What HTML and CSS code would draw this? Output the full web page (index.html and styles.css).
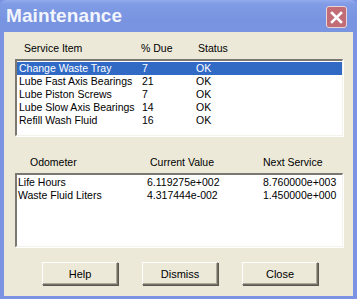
FILE: index.html
```html
<!DOCTYPE html>
<html>
<head>
<meta charset="utf-8">
<link rel="stylesheet" href="styles.css">
</head>
<body>
<div class="window">
  <div class="titlebar">
    <span class="title">Maintenance</span>
    <span class="close-btn">
      <svg width="13" height="13" viewBox="0 0 13 13"><path d="M2 2 L11 11 M11 2 L2 11" stroke="#fff" stroke-width="2.6" stroke-linecap="square"/></svg>
    </span>
  </div>
  <div class="content">
    <div class="head head1">
      <span>Service Item</span><span>% Due</span><span>Status</span>
    </div>
    <div class="listbox list1">
      <div class="row r1 selected"><span>Change Waste Tray</span><span>7</span><span>OK</span></div>
      <div class="row r1"><span>Lube Fast Axis Bearings</span><span>21</span><span>OK</span></div>
      <div class="row r1"><span>Lube Piston Screws</span><span>7</span><span>OK</span></div>
      <div class="row r1"><span>Lube Slow Axis Bearings</span><span>14</span><span>OK</span></div>
      <div class="row r1"><span>Refill Wash Fluid</span><span>16</span><span>OK</span></div>
    </div>
    <div class="head head2">
      <span>Odometer</span><span>Current Value</span><span>Next Service</span>
    </div>
    <div class="listbox list2">
      <div class="row r2"><span>Life Hours</span><span>6.119275e+002</span><span>8.760000e+003</span></div>
      <div class="row r2"><span>Waste Fluid Liters</span><span>4.317444e-002</span><span>1.450000e+000</span></div>
    </div>
    <div class="buttons">
      <button class="btn">Help</button>
      <button class="btn">Dismiss</button>
      <button class="btn">Close</button>
    </div>
  </div>
</div>
</body>
</html>
```

FILE: styles.css
```css
html, body {
  margin: 0;
  padding: 0;
  background: #ece9d8;
}
.window {
  width: 357px;
  height: 299px;
  box-sizing: border-box;
  background: #7b93e2;
  padding: 0 4px 3px 4px;
  display: flex;
  flex-direction: column;
  font-family: "Liberation Sans", Arial, sans-serif;
  font-size: 10.5px;
  color: #000;
}
.titlebar {
  height: 32px;
  margin: 0 -4px;
  padding: 0 10px 0 6px;
  display: flex;
  align-items: center;
  justify-content: space-between;
  background: linear-gradient(#93aaee 0px, #819ce6 4px, #7893e0 20px, #7a95e0 32px);
  border-radius: 6px 6px 0 0;
}
.title {
  color: #f2f5fd;
  font-weight: bold;
  font-size: 19px;
  letter-spacing: 0.1px;
  margin-top: -1px;
}
.close-btn {
  width: 19px;
  height: 20px;
  margin-top: 2px;
  background: #c26c76;
  border: 1px solid #e9d4dc;
  border-radius: 3px;
  display: flex;
  align-items: center;
  justify-content: center;
}
.content {
  flex: 1;
  background: #ece9d8;
  padding: 10px 10px 0 11px;
  display: flex;
  flex-direction: column;
}
.head {
  display: grid;
  height: 13px;
  line-height: 13px;
  margin-bottom: 4px;
}
.head1 {
  grid-template-columns: 117px 57px 1fr;
  padding-left: 9px;
}
.head2 {
  grid-template-columns: 120px 113px 1fr;
  padding-left: 15px;
  margin-top: 20px;
}
.listbox {
  background: #fff;
  box-sizing: border-box;
  border-top: 2px solid #7a7870;
  border-left: 2px solid #7a7870;
  border-right: 1px solid #f4f2ea;
  border-bottom: 1px solid #f4f2ea;
  box-shadow: 1px 1px 0 #fff;
  width: 328px;
  padding: 1px 0 0 0;
}
.list1 {
  height: 77px;
}
.list2 {
  height: 74px;
}
.row {
  display: grid;
  height: 13px;
  line-height: 13px;
  padding-left: 2px;
  white-space: nowrap;
}
.r1 {
  grid-template-columns: 123px 54px 1fr;
}
.r2 {
  grid-template-columns: 129px 116px 1fr;
  padding-left: 1px;
}
.row.selected {
  background: #316ac5;
  color: #fff;
}
.buttons {
  display: flex;
  gap: 24px;
  margin-top: 15px;
  padding-left: 27px;
}
.btn {
  width: 76px;
  height: 23px;
  box-sizing: border-box;
  background: #ece9d8;
  font-family: "Liberation Sans", Arial, sans-serif;
  font-size: 11px;
  color: #000;
  border-top: 1px solid #fff;
  border-left: 1px solid #fff;
  border-right: 1px solid #716f64;
  border-bottom: 1px solid #716f64;
  box-shadow: inset -1px -1px 0 #aca899, 1px 1px 0 #5a5850;
  padding: 0;
}
```
